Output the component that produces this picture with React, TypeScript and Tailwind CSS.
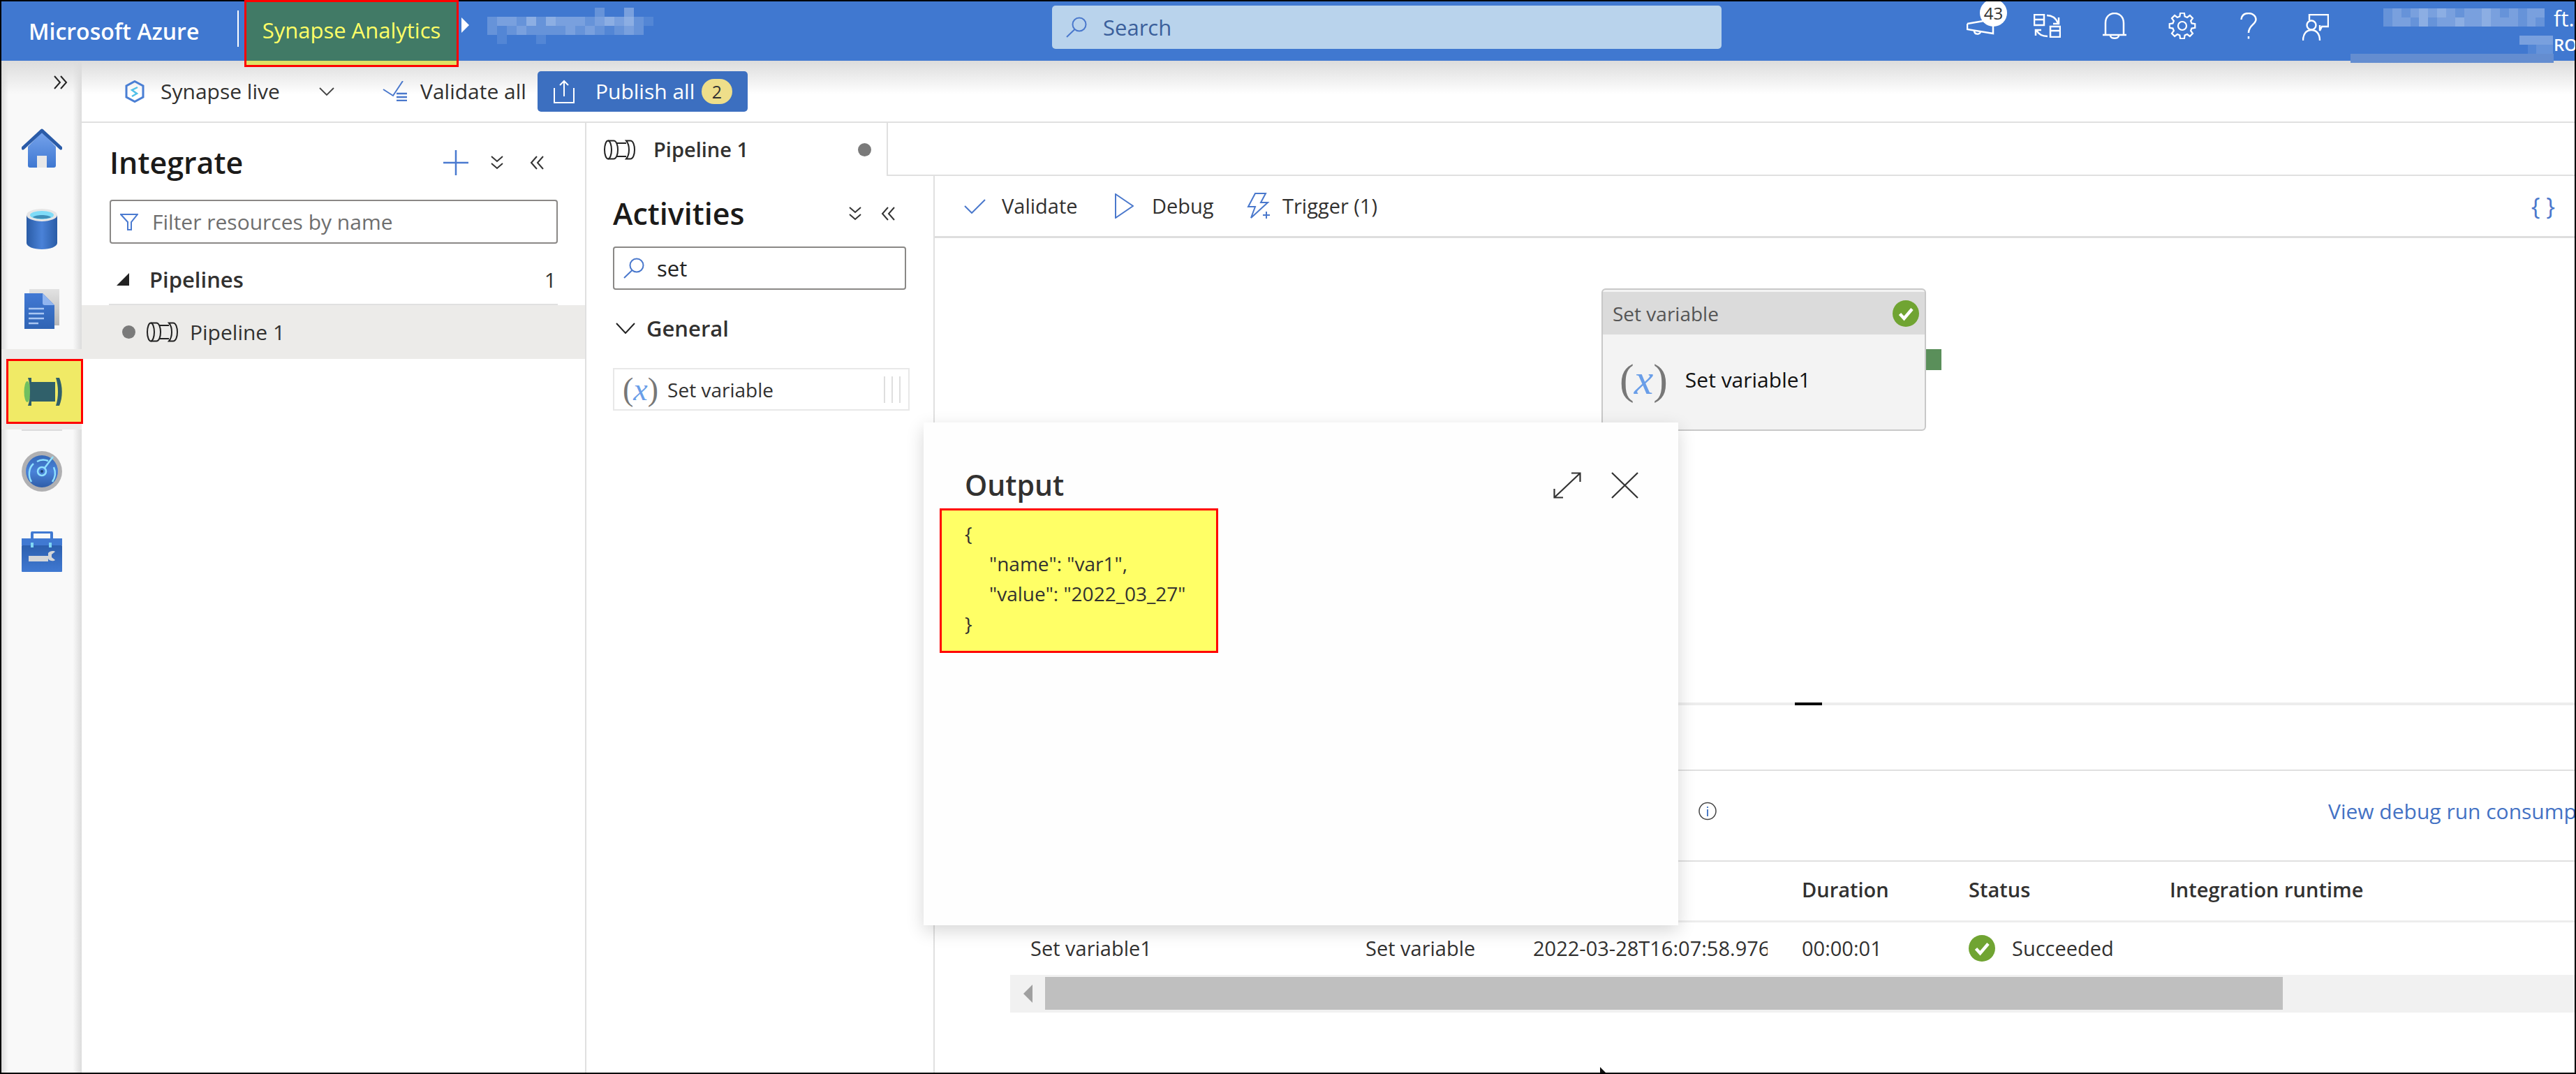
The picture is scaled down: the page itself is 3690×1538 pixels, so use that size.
import React from 'react';

const levels = ['bg-transparent', 'bg-white/10', 'bg-white/20', 'bg-white/30', 'bg-white/40', 'bg-white/50'];

function Mosaic({ rows, cell }: { rows: string[]; cell: string }) {
  return (
    <div className="flex flex-col">
      {rows.map((row, i) => (
        <div key={i} className="flex">
          {row.split('').map((v, j) => (
            <div key={j} className={`${cell} ${levels[Number(v)]}`} />
          ))}
        </div>
      ))}
    </div>
  );
}

function PipelineGlyph() {
  return (
    <svg viewBox="0 0 45 29" className="w-[45px] h-[29px] shrink-0" fill="none" stroke="#222" strokeWidth="2">
      <ellipse cx="6" cy="14.5" rx="5" ry="13" />
      <path d="M6 1.5H14C18 1.5 20 8 20 14.5S18 27.5 14 27.5H6" />
      <path d="M19 5H32M19 24H32" />
      <path d="M32 1.5H38C42 1.5 44 8 44 14.5S42 27.5 38 27.5H32C35 24 36 19 36 14.5S35 5 32 1.5Z" />
    </svg>
  );
}

function DoubleDown() {
  return (
    <svg viewBox="0 0 20 20" className="w-[20px] h-[20px] shrink-0" fill="none" stroke="#333" strokeWidth="2">
      <path d="M2 1L10 8L18 1M2 11L10 18L18 11" />
    </svg>
  );
}

function DoubleLeft() {
  return (
    <svg viewBox="0 0 21 20" className="w-[21px] h-[20px] shrink-0" fill="none" stroke="#333" strokeWidth="2">
      <path d="M10 1L2 10L10 19M19 1L11 10L19 19" />
    </svg>
  );
}

function SearchGlyph({ color }: { color: string }) {
  return (
    <svg viewBox="0 0 30 30" className="w-[30px] h-[30px] shrink-0" fill="none" stroke={color} strokeWidth="2">
      <circle cx="19" cy="11" r="9.5" />
      <path d="M12.5 18L1 29" />
    </svg>
  );
}

function CheckBadge({ className }: { className: string }) {
  return (
    <svg viewBox="0 0 38 38" className={className}>
      <circle cx="19" cy="19" r="19" fill="#70a432" />
      <path d="M10.5 19.5L16.5 26L28 12.5" fill="none" stroke="#fff" strokeWidth="4.5" />
    </svg>
  );
}

function VariableGlyph({ big }: { big?: boolean }) {
  return (
    <span className={`flex items-center font-['Liberation_Serif',serif] leading-none ${big ? 'text-[62px]' : 'text-[46px]'}`}>
      <span className="text-[#777] font-light">(</span>
      <span className="text-[#6a9ee8] italic">x</span>
      <span className="text-[#777] font-light">)</span>
    </span>
  );
}

function gearPath() {
  const pts: string[] = [];
  for (let i = 0; i < 8; i++) {
    const a = (i * 45 - 90) * (Math.PI / 180);
    [[14, -15], [18.5, -9], [18.5, 9], [14, 15]].forEach(([r, d]) => {
      const t = a + (d * Math.PI) / 180;
      pts.push(`${(20 + r * Math.cos(t)).toFixed(1)} ${(19 + r * Math.sin(t)).toFixed(1)}`);
    });
  }
  return `M${pts.join('L')}Z`;
}

function HeaderIcons() {
  return (
    <div className="flex items-start h-[85px] overflow-hidden">
      <div className="relative w-[58px] h-[85px] shrink-0">
        <svg viewBox="0 0 58 30" className="absolute left-0 top-[23px] w-[58px] h-[30px]" fill="none" stroke="#fff" strokeWidth="2.5">
          <path d="M1 9L36 3M1 9V17L38 23V10M11 19C11 25 20 25 20 20" />
        </svg>
        <div className="absolute left-[19px] top-[-3px] w-[39px] h-[39px] rounded-full bg-white flex items-center justify-center text-[24px] text-[#333] leading-none">
          43
        </div>
      </div>
      <svg viewBox="0 0 39 34" className="ml-[38px] mt-[18px] w-[39px] h-[34px] shrink-0" fill="none" stroke="#fff" strokeWidth="2.5">
        <path d="M1 1H15V16H1ZM1 8H15M24 18H38V33H24ZM24 24H38" />
        <path d="M19 2C26 2 32 6 35 13M36 5V14H28M20 32C12 32 7 29 4 23M3 31V23H11" />
      </svg>
      <svg viewBox="0 0 34 38" className="ml-[60px] mt-[16px] w-[34px] h-[38px] shrink-0" fill="none" stroke="#fff" strokeWidth="2.5">
        <path d="M4 31V15C4 7 9 1 17 1S30 7 30 15V31M0 32H34M11 33C11 38 23 38 23 33" />
      </svg>
      <svg viewBox="0 0 40 38" className="ml-[60px] mt-[16px] w-[40px] h-[38px] shrink-0" fill="none" stroke="#fff" strokeWidth="2.2">
        <path d="M0 0" />
        <path d={gearPath()} />
        <circle cx="20" cy="19" r="6" />
      </svg>
      <svg viewBox="0 0 24 38" className="ml-[63px] mt-[16px] w-[24px] h-[38px] shrink-0" fill="none" stroke="#fff" strokeWidth="2.5">
        <path d="M1.5 10C2 4 6 1 12 1S22.500 5 22.500 10C22.500 17 12 18 12 29M12 34V37.500" />
      </svg>
      <svg viewBox="0 0 38 38" className="ml-[65px] mt-[18px] w-[38px] h-[38px] shrink-0" fill="none" stroke="#fff" strokeWidth="2.4">
        <path d="M10 9V1H37V18H28L25 24V16" />
        <circle cx="13" cy="16" r="6.500" />
        <path d="M1 38C1 27 7 23 13 23S25 27 25 38" />
      </svg>
    </div>
  );
}

function NavIcons() {
  return (
    <div className="flex flex-col pt-[68px]">
      <div className="h-[115px] flex items-center justify-center">
        <svg viewBox="0 0 58 57" className="w-[58px] h-[57px]">
          <defs>
            <linearGradient id="hm" x1="0" y1="0" x2="0" y2="1">
              <stop offset="0" stopColor="#76a3ec" />
              <stop offset="1" stopColor="#3f78d1" />
            </linearGradient>
          </defs>
          <path d="M29 5L9 26V53Q9 56 12 56H46Q49 56 49 53V26Z" fill="url(#hm)" />
          <path d="M2 28L29 3L56 28" fill="none" stroke="#2a5ba8" strokeWidth="5" strokeLinecap="round" strokeLinejoin="round" />
          <rect x="22" y="39" width="14" height="17" fill="#e8e8e8" />
        </svg>
      </div>
      <div className="h-[115px] flex items-center justify-center">
        <svg viewBox="0 0 46 58" className="w-[46px] h-[58px]">
          <defs>
            <linearGradient id="cy" x1="0" y1="0" x2="1" y2="0">
              <stop offset="0" stopColor="#2a5ca6" />
              <stop offset="0.5" stopColor="#4a82d8" />
              <stop offset="1" stopColor="#2a5ca6" />
            </linearGradient>
          </defs>
          <path d="M1 9V49C1 54 11 58 23 58S45 54 45 49V9Z" fill="url(#cy)" />
          <ellipse cx="23" cy="9" rx="22" ry="9" fill="#e6e6e6" />
          <ellipse cx="23" cy="9" rx="17" ry="6" fill="#7fdcf8" />
          <path d="M10 12C14 8 32 8 36 12C32 15 14 15 10 12Z" fill="#3f8fb8" />
        </svg>
      </div>
      <div className="h-[115px] flex items-center justify-center">
        <svg viewBox="0 0 50 58" className="w-[50px] h-[58px]">
          <defs>
            <linearGradient id="dc" x1="0" y1="0" x2="0" y2="1">
              <stop offset="0" stopColor="#4279d4" />
              <stop offset="1" stopColor="#2f64b4" />
            </linearGradient>
            <linearGradient id="dg" x1="0" y1="0" x2="0" y2="1">
              <stop offset="0" stopColor="#e2e2e2" />
              <stop offset="1" stopColor="#b8b8b8" />
            </linearGradient>
          </defs>
          <rect x="7" y="0" width="43" height="52" fill="url(#dg)" />
          <path d="M0 6H26L43 23V57H0Z" fill="url(#dc)" />
          <path d="M26 6L43 23H29Q26 23 26 20Z" fill="#91b5ef" />
          <path d="M6 28H28M6 35H28M6 42H28M6 49H20" stroke="#a9c6f2" strokeWidth="2.4" />
        </svg>
      </div>
      <div className="relative h-[115px] bg-[#ecebe9] flex items-center justify-center">
        <div className="absolute left-[7px] top-[14px] w-[110px] h-[93px] border-[3px] border-[#ff0000] bg-[#f0ea66] z-10 flex items-center justify-center">
          <svg viewBox="0 0 56 40" className="w-[56px] h-[40px] ml-[-5px]">
            <ellipse cx="5" cy="20" rx="4.500" ry="15" fill="#70c060" />
            <path d="M6 0H11V6H45V34H11V40H6C10 30 10 10 6 0Z" fill="#30606a" />
            <path d="M46 0H51C56 12 56 28 51 40H46C50 28 50 12 46 0Z" fill="#30606a" />
          </svg>
        </div>
      </div>
      <div className="w-[58px] mx-auto h-[2px] bg-[#dcdcdc]" />
      <div className="h-[115px] flex items-center justify-center">
        <svg viewBox="0 0 58 58" className="w-[58px] h-[58px]">
          <defs>
            <linearGradient id="mn" x1="0" y1="0" x2="0" y2="1">
              <stop offset="0" stopColor="#3569b8" />
              <stop offset="0.5" stopColor="#4a82d8" />
              <stop offset="1" stopColor="#2f5ea8" />
            </linearGradient>
          </defs>
          <circle cx="29" cy="29" r="29" fill="#b0b0b2" />
          <circle cx="29" cy="29" r="23" fill="url(#mn)" />
          <g fill="none" stroke="#8fe0ff" strokeWidth="2.500">
            <circle cx="29" cy="29" r="6" />
            <path d="M33 24L45 8M14 44C9 36 10 24 17 18M44 44C48 38 49 30 46 23M22 15C27 12 33 12 38 14" />
          </g>
          <circle cx="29" cy="29" r="2" fill="#1d3f70" />
        </svg>
      </div>
      <div className="h-[115px] flex items-center justify-center">
        <svg viewBox="0 0 58 58" className="w-[58px] h-[58px]">
          <defs>
            <linearGradient id="tb" x1="0" y1="0" x2="0" y2="1">
              <stop offset="0" stopColor="#2c5fae" />
              <stop offset="1" stopColor="#4079d2" />
            </linearGradient>
          </defs>
          <path d="M15 11V3Q15 1 17 1H41Q43 1 43 3V11" fill="none" stroke="#4079d2" strokeWidth="4" />
          <rect x="0" y="10" width="58" height="10" fill="#4079d2" />
          <rect x="0" y="20" width="58" height="38" rx="1" fill="url(#tb)" />
          <path d="M15 16V23M41 16V23" stroke="#7fd6f4" strokeWidth="4" />
          <path d="M10 35H38V31C40 28 46 27 48 29L43 33V37L48 41C46 43 40 43 38 39V43H10Z" fill="#d4d6d8" />
        </svg>
      </div>
    </div>
  );
}

export default function App() {
  return (
    <div className="relative w-[3690px] h-[1538px] border-2 border-black bg-white flex flex-col font-['Open_Sans',sans-serif] text-[#323130]">
      <header className="h-[85px] bg-[#4078d0] flex items-start shrink-0">
        <div className="w-[1505px] h-[85px] flex items-center shrink-0">
          <span className="ml-[39px] w-[260px] text-[32px] font-semibold text-white whitespace-nowrap">Microsoft Azure</span>
          <div className="ml-[39px] w-[2px] h-[52px] bg-white mt-[-7px]" />
          <div className="relative ml-[8px] w-[307px] h-[85px] shrink-0">
            <div className="absolute left-0 top-[-2px] w-[307px] h-[96px] border-[3px] border-[#ff0000] bg-[#417a66] z-20 flex justify-center">
              <span className="mt-[17px] text-[31px] text-[#ffff66] whitespace-nowrap leading-[46px]">Synapse Analytics</span>
              <div className="absolute left-0 right-0 bottom-0 h-[6px] bg-[#e0e064]" />
            </div>
          </div>
          <svg viewBox="0 0 11 22" className="ml-[4px] mt-[-17px] w-[11px] h-[22px] shrink-0">
            <path d="M0 0L11 11L0 22Z" fill="#fff" />
          </svg>
          <div className="ml-[26px] mt-[-15px]">
            <Mosaic
              cell="w-[14px] h-[13px]"
              rows={['00000000000200300', '23324243332343421', '21232222323212320', '01000100000000000']}
            />
          </div>
        </div>
        <div className="w-[959px] h-[62px] mt-[6px] bg-[#b9d3ec] rounded-[5px] flex items-center pl-[20px] shrink-0">
          <SearchGlyph color="#4a78cc" />
          <span className="ml-[23px] text-[31px] text-[#3b5f9b]">Search</span>
        </div>
        <div className="ml-[351px] shrink-0">
          <HeaderIcons />
        </div>
        <div className="ml-[31px] w-[322px] h-[88px] overflow-hidden flex flex-col items-end shrink-0 z-10">
          <div className="flex mt-[10px] h-[26px] pr-0 w-[322px] justify-start items-start">
            <div className="ml-[47px] w-[244px] shrink-0">
              <Mosaic cell="w-[13px] h-[13px]" rows={['2323434323343232330', '2332423343343332320']} />
            </div>
            <span className="text-[31px] leading-[28px] text-white whitespace-nowrap">ft.c</span>
          </div>
          <div className="flex w-[322px] h-[26px] mt-[13px] items-start">
            <div className="ml-[242px] w-[49px] shrink-0">
              <Mosaic cell="w-[12px] h-[13px]" rows={['3333', '0122']} />
            </div>
            <span className="mt-[3px] text-[24px] leading-[20px] font-semibold text-white whitespace-nowrap">RO</span>
          </div>
          <div className="w-[322px] h-[13px] shrink-0 flex">
            <div className="w-[291px] h-[13px] bg-[#648dd0]" />
          </div>
        </div>
      </header>

      <div className="flex flex-1 min-h-0">
        <nav className="w-[115px] shrink-0 bg-[linear-gradient(#dcdcdc,transparent_48px),linear-gradient(90deg,#dddddd,#f9f9f9_9%,#f9f9f9_89%,#dcdcdc)] relative">
          <svg viewBox="0 0 22 20" className="absolute left-[74px] top-[21px] w-[22px] h-[20px]" fill="none" stroke="#222" strokeWidth="2">
            <path d="M2 1L10 10L2 19M11 1L19 10L11 19" />
          </svg>
          <NavIcons />
        </nav>

        <div className="flex-1 min-w-0 flex flex-col">
          <div className="h-[89px] shrink-0 border-b-2 border-[#e0e0e0] bg-[linear-gradient(#dcdcdc,#ffffff_55%)] flex items-center">
            <svg viewBox="0 0 30 32" className="ml-[61px] w-[30px] h-[32px] shrink-0" fill="none">
              <path d="M15 1.500L27 8V24L15 30.500L3 24V8Z" stroke="#4a7fd4" strokeWidth="3" />
              <path d="M19 10L11 14L18 19L11 23" stroke="#50c0e8" strokeWidth="2.500" />
            </svg>
            <span className="ml-[22px] w-[167px] text-[30px] whitespace-nowrap">Synapse live</span>
            <svg viewBox="0 0 22 12" className="ml-[60px] w-[22px] h-[12px] shrink-0" fill="none" stroke="#444" strokeWidth="1.800">
              <path d="M1 1L11 11L21 1" />
            </svg>
            <svg viewBox="0 0 35 29" className="ml-[69px] w-[35px] h-[29px] shrink-0" fill="none">
              <path d="M1 12L15 21L29 0" stroke="#4a78cc" strokeWidth="2" />
              <path d="M20 18H35M20 23H35M20 28H35" stroke="#4a78cc" strokeWidth="2.600" />
            </svg>
            <span className="ml-[19px] w-[148px] text-[30px] whitespace-nowrap">Validate all</span>
            <button className="ml-[20px] w-[301px] h-[58px] bg-[#3c6fc0] rounded-[5px] flex items-center shrink-0">
              <svg viewBox="0 0 32 34" className="ml-[22px] w-[32px] h-[34px] shrink-0" fill="none" stroke="#fff" strokeWidth="2">
                <path d="M2 12V33H30V12M16 24V2M10 8L16 2L22 8" />
              </svg>
              <span className="ml-[29px] w-[137px] text-[30px] text-white text-left whitespace-nowrap">Publish all</span>
              <span className="ml-[15px] w-[44px] h-[36px] rounded-full bg-[#eede8a] text-[25px] leading-[36px] text-[#333] text-center">2</span>
            </button>
          </div>

          <div className="flex-1 min-h-0 flex">
            <aside className="w-[723px] shrink-0 border-r-2 border-[#e0e0e0] flex flex-col">
              <div className="mt-[24px] h-[66px] pl-[40px] flex items-center">
                <span className="w-[478px] text-[43px] font-semibold text-[#1b1a19] whitespace-nowrap">Integrate</span>
                <svg viewBox="0 0 36 36" className="w-[36px] h-[36px] shrink-0" fill="none" stroke="#4a7ad0" strokeWidth="2.500">
                  <path d="M18 0V36M0 18H36" />
                </svg>
                <div className="ml-[31px]"><DoubleDown /></div>
                <div className="ml-[37px]"><DoubleLeft /></div>
              </div>
              <div className="mt-[20px] ml-[40px] w-[642px] h-[63px] border-2 border-[#8a8886] rounded-[4px] flex items-center pl-[13px]">
                <svg viewBox="0 0 26 24" className="w-[26px] h-[24px] shrink-0" fill="none" stroke="#4a7ad0" strokeWidth="2">
                  <path d="M1 1H25L16 12V23H11V12Z" />
                </svg>
                <span className="ml-[20px] text-[30px] text-[#6e6e6e] whitespace-nowrap">Filter resources by name</span>
              </div>
              <div className="mt-[16px] h-[70px] mx-[39px] flex items-center">
                <svg viewBox="0 0 18 18" className="ml-[11px] w-[18px] h-[18px] shrink-0">
                  <path d="M18 0V18H0Z" fill="#222" />
                </svg>
                <span className="ml-[29px] text-[31px] font-semibold text-[#323130]">Pipelines</span>
                <span className="ml-auto mr-[2px] text-[30px]">1</span>
              </div>
              <div className="mx-[39px] h-[2px] bg-[#e0e0e0]" />
              <div className="h-[77px] bg-[#ecebe9] flex items-center pl-[58px]">
                <div className="w-[19px] h-[19px] rounded-full bg-[#7a7a7a] shrink-0" />
                <div className="ml-[16px]"><PipelineGlyph /></div>
                <span className="ml-[17px] text-[30px] whitespace-nowrap">Pipeline 1</span>
              </div>
            </aside>

            <div className="flex-1 min-w-0 flex flex-col">
              <div className="h-[76px] shrink-0 flex">
                <div className="w-[432px] h-[76px] border-r-2 border-[#e0e0e0] flex items-center pl-[25px] pr-[22px] shrink-0">
                  <PipelineGlyph />
                  <span className="ml-[26px] text-[29px] font-semibold whitespace-nowrap">Pipeline 1</span>
                  <div className="ml-auto w-[19px] h-[19px] rounded-full bg-[#7a7a7a]" />
                </div>
                <div className="flex-1 border-b-2 border-[#e0e0e0]" />
              </div>

              <div className="flex-1 min-h-0 flex">
                <section className="w-[499px] shrink-0 border-r-2 border-[#e0e0e0] flex flex-col">
                  <div className="mt-[23px] h-[62px] ml-[38px] flex items-center">
                    <span className="w-[337px] text-[43px] font-semibold text-[#1b1a19] whitespace-nowrap">Activities</span>
                    <DoubleDown />
                    <div className="ml-[27px]"><DoubleLeft /></div>
                  </div>
                  <div className="mt-[16px] ml-[38px] w-[420px] h-[62px] border-2 border-[#8a8886] rounded-[4px] flex items-center pl-[13px]">
                    <SearchGlyph color="#4a78cc" />
                    <span className="ml-[18px] text-[31px] text-[#222]">set</span>
                  </div>
                  <div className="mt-[30px] h-[50px] ml-[42px] flex items-center">
                    <svg viewBox="0 0 28 16" className="w-[28px] h-[16px] shrink-0" fill="none" stroke="#222" strokeWidth="2">
                      <path d="M1 1L14 15L27 1" />
                    </svg>
                    <span className="ml-[16px] text-[31px] font-semibold text-[#323130]">General</span>
                  </div>
                  <div className="mt-[32px] ml-[38px] w-[425px] h-[61px] border-2 border-[#e8e8e8] flex items-center pl-[12px] pr-[11px]">
                    <VariableGlyph />
                    <span className="ml-[13px] text-[28px] whitespace-nowrap">Set variable</span>
                    <div className="ml-auto flex gap-[9px] h-[38px]">
                      <div className="w-[2px] bg-[#dedede]" />
                      <div className="w-[2px] bg-[#dedede]" />
                      <div className="w-[2px] bg-[#dedede]" />
                    </div>
                  </div>
                </section>

                <main className="flex-1 min-w-0 flex flex-col overflow-hidden">
                  <div className="h-[89px] shrink-0 border-b-[3px] border-[#dedede] flex items-center">
                    <svg viewBox="0 0 31 21" className="ml-[42px] w-[31px] h-[21px] shrink-0" fill="none" stroke="#4a78cc" strokeWidth="2">
                      <path d="M1 10L11 20L30 1" />
                    </svg>
                    <span className="ml-[23px] w-[108px] text-[29px] whitespace-nowrap">Validate</span>
                    <svg viewBox="0 0 27 36" className="ml-[54px] w-[27px] h-[36px] shrink-0" fill="none" stroke="#4a78cc" strokeWidth="2">
                      <path d="M1 1L26 18L1 35Z" />
                    </svg>
                    <span className="ml-[26px] w-[91px] text-[29px] whitespace-nowrap">Debug</span>
                    <svg viewBox="0 0 34 38" className="ml-[45px] w-[34px] h-[38px] shrink-0" fill="none" stroke="#4a78cc" strokeWidth="2">
                      <path d="M12 1H27L20 14H30L6 36L12 20H2Z" />
                      <path d="M28 27V37M23 32H33" />
                    </svg>
                    <span className="ml-[17px] text-[29px] whitespace-nowrap">Trigger (1)</span>
                    <span className="ml-auto mr-[28px] text-[34px] text-[#4a78cc] whitespace-nowrap">{'{ }'}</span>
                  </div>

                  <div className="relative h-[665px] shrink-0">
                    <div className="absolute left-[955px] top-[72px] w-[465px] h-[204px] border-2 border-[#c8c8c8] rounded-[6px] bg-[#f3f3f3] pt-[3px] flex flex-col">
                      <div className="h-[61px] bg-[#dbdbdb] flex items-center pl-[14px] pr-[8px]">
                        <span className="text-[28px] text-[#555]">Set variable</span>
                        <CheckBadge className="ml-auto w-[38px] h-[38px]" />
                      </div>
                      <div className="flex-1 flex items-center pl-[24px] pb-[8px]">
                        <VariableGlyph big />
                        <span className="ml-[25px] text-[30px] text-[#111] whitespace-nowrap">Set variable1</span>
                      </div>
                      <div className="absolute left-[463px] top-[85px] w-[22px] h-[30px] bg-[#5a8f5a]" />
                    </div>
                  </div>

                  <div className="relative h-[4px] shrink-0 bg-[#ededed]">
                    <div className="absolute left-[1232px] top-0 w-[39px] h-[4px] bg-black" />
                  </div>
                  <div className="h-[94px] shrink-0 border-b-2 border-[#e0e0e0]" />
                  <div className="h-[130px] shrink-0 border-b-2 border-[#e0e0e0] flex items-center pb-[14px]">
                    <svg viewBox="0 0 26 27" className="ml-[1094px] w-[26px] h-[27px] shrink-0" fill="none">
                      <circle cx="13" cy="13.500" r="12" stroke="#444" strokeWidth="1.500" />
                      <path d="M13 11V21M13 7V9" stroke="#3a6fc0" strokeWidth="1.800" />
                    </svg>
                    <span className="ml-auto w-[353px] overflow-hidden text-[30px] text-[#4472c4] whitespace-nowrap">View debug run consumption</span>
                  </div>
                  <div className="h-[87px] shrink-0 border-b-[3px] border-[#ededed] grid grid-cols-[1242px_239px_288px_1fr] items-center pb-[5px]">
                    <div />
                    <span className="text-[29px] font-semibold">Duration</span>
                    <span className="text-[29px] font-semibold">Status</span>
                    <span className="text-[29px] font-semibold whitespace-nowrap">Integration runtime</span>
                  </div>
                  <div className="h-[75px] shrink-0 pl-[137px] grid grid-cols-[480px_240px_385px_239px_288px_1fr] items-center pb-[1px] text-[29px]">
                    <span className="whitespace-nowrap">Set variable1</span>
                    <span className="whitespace-nowrap">Set variable</span>
                    <span className="w-[336px] overflow-hidden whitespace-nowrap">2022-03-28T16:07:58.976</span>
                    <span className="whitespace-nowrap">00:00:01</span>
                    <span className="flex items-center whitespace-nowrap">
                      <CheckBadge className="w-[38px] h-[38px] shrink-0" />
                      <span className="ml-[24px]">Succeeded</span>
                    </span>
                    <div />
                  </div>
                  <div className="ml-[108px] h-[54px] shrink-0 bg-[#f1f1f1] flex items-center pb-[1px]">
                    <svg viewBox="0 0 13 26" className="ml-[19px] w-[13px] h-[26px] shrink-0">
                      <path d="M13 0V26L0 13Z" fill="#a0a0a0" />
                    </svg>
                    <div className="ml-[18px] w-[1773px] h-[47px] bg-[#bfbfbf]" />
                  </div>
                </main>
              </div>
            </div>
          </div>
        </div>
      </div>

      <div className="absolute left-[1321px] top-[603px] w-[1081px] h-[720px] bg-[#fefefe] shadow-[0_8px_24px_rgba(0,0,0,0.16)] z-30 flex flex-col">
        <div className="mt-[63px] h-[54px] pl-[59px] pr-[57px] flex items-center justify-between">
          <span className="text-[41px] font-semibold text-[#323130]">Output</span>
          <div className="flex items-center gap-[43px]">
            <svg viewBox="0 0 40 38" className="w-[40px] h-[38px]" fill="none" stroke="#333" strokeWidth="2.200">
              <path d="M2 36L38 2M26 1.500H38.500V14M1.500 24V36.500H14" />
            </svg>
            <svg viewBox="0 0 39 38" className="w-[39px] h-[38px]" fill="none" stroke="#333" strokeWidth="2.200">
              <path d="M1 1L38 37M38 1L1 37" />
            </svg>
          </div>
        </div>
        <div className="mt-[6px] ml-[23px] w-[399px] h-[207px] border-[3px] border-[#ff0000] bg-[#ffff66] pl-[33px] pt-[12px] text-[28px] leading-[43px] text-[#323130]">
          <div>{'{'}</div>
          <div className="pl-[35px] whitespace-nowrap">"name": "var1",</div>
          <div className="pl-[35px] whitespace-nowrap">"value": "2022_03_27"</div>
          <div>{'}'}</div>
        </div>
      </div>

      <svg viewBox="0 0 10 8" className="absolute left-[2289px] top-[1526px] w-[10px] h-[8px] z-40">
        <path d="M1 0L9 8H1Z" fill="#111" />
      </svg>
    </div>
  );
}
